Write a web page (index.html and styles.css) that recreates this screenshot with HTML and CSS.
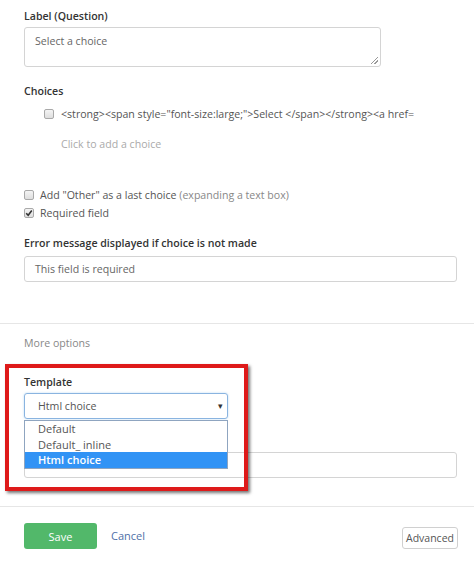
FILE: index.html
```html
<!DOCTYPE html>
<html>
<head>
<meta charset="utf-8">
<link rel="stylesheet" href="styles.css">
</head>
<body>
<div class="page">
  <section class="sec top">
    <div class="label">Label (Question)</div>
    <div class="textarea">Select a choice<span class="grip"></span></div>

    <div class="label choices-label">Choices</div>
    <div class="choice-row">
      <span class="cb"></span>
      <span class="choice-text">&lt;strong&gt;&lt;span style="font-size:large;"&gt;Select &lt;/span&gt;&lt;/strong&gt;&lt;a href=</span>
    </div>
    <div class="add-choice">Click to add a choice</div>

    <div class="check-row other"><span class="cb"></span><span>Add "Other" as a last choice <span class="muted">(expanding a text box)</span></span></div>
    <div class="check-row req"><span class="cb checked"><svg viewBox="0 0 10 10" width="10" height="10"><path d="M2.2 5.2 L4.2 7.2 L7.8 2.6" fill="none" stroke="#333" stroke-width="1.6"/></svg></span><span>Required field</span></div>

    <div class="label err-label">Error message displayed if choice is not made</div>
    <div class="input">This field is required</div>
  </section>

  <div class="rule rule1"></div>

  <section class="sec more-sec">
    <div class="more">More options</div>
    <div class="label tpl-label">Template</div>
    <div class="select-wrap">
      <div class="select">Html choice<span class="arrow">&#9662;</span></div>
      <ul class="dropdown">
        <li>Default</li>
        <li>Default_ inline</li>
        <li class="sel">Html choice</li>
      </ul>
    </div>
    <div class="input under"></div>
  </section>

  <div class="rule rule2"></div>

  <footer class="footer">
    <button class="save">Save</button>
    <a class="cancel">Cancel</a>
    <span class="spacer"></span>
    <button class="advanced">Advanced</button>
  </footer>

  <div class="annotation"></div>
</div>
</body>
</html>
```

FILE: styles.css
```css
html, body {
  margin: 0;
  padding: 0;
  background: #fff;
}
.page {
  position: relative;
  width: 474px;
  height: 566px;
  overflow: hidden;
  font-family: "Open Sans", "Noto Sans", sans-serif;
  font-size: 10.6px;
  line-height: 16px;
  color: #555;
}
.sec {
  padding: 0 17px 0 24px;
  display: flex;
  flex-direction: column;
  align-items: flex-start;
}
.top { padding-top: 8px; }
.label {
  font-weight: 600;
  color: #333;
}
.textarea {
  position: relative;
  box-sizing: border-box;
  width: 357px;
  height: 40px;
  margin-top: 3px;
  border: 1px solid #d4d4d4;
  border-radius: 3px;
  padding: 5px 10px;
  color: #666;
}
.grip {
  position: absolute;
  right: 2px;
  bottom: 2px;
  width: 7px;
  height: 7px;
  background: linear-gradient(135deg, transparent 45%, #999 45%, #999 55%, transparent 55%, transparent 70%, #999 70%, #999 80%, transparent 80%);
}
.choices-label { margin-top: 16px; }
.choice-row {
  margin-top: 7px;
  display: flex;
  align-items: center;
  padding-left: 20px;
  width: 394px;
  box-sizing: border-box;
  color: #555;
}
.choice-text {
  margin-left: 7px;
  white-space: nowrap;
  overflow: hidden;
  flex: 1;
}
.cb {
  flex: none;
  box-sizing: border-box;
  width: 10px;
  height: 10px;
  border: 1px solid #a9a9a9;
  border-radius: 2px;
  background: linear-gradient(#f4f4f4, #dedede);
  display: inline-flex;
}
.cb svg { display: block; margin: -1px; }
.add-choice {
  margin-top: 14px;
  padding-left: 37px;
  color: #aaa;
}
.check-row {
  display: flex;
  align-items: center;
  color: #555;
}
.check-row .cb { margin-right: 6px; }
.other { margin-top: 35px; }
.req { margin-top: 2px; }
.muted { color: #888; }
.err-label { margin-top: 14px; }
.input {
  box-sizing: border-box;
  width: 433px;
  height: 26px;
  margin-top: 5px;
  border: 1px solid #d4d4d4;
  border-radius: 3px;
  padding: 4px 10px;
  color: #666;
}
.rule {
  height: 1px;
  background: #e6e6e6;
}
.rule1 { margin-top: 41px; }
.more {
  margin-top: 11px;
  color: #888;
}
.tpl-label { margin-top: 23px; }
.select-wrap {
  position: relative;
  margin-top: 3px;
}
.select {
  box-sizing: border-box;
  width: 204px;
  height: 26px;
  border: 1px solid #8ab4e0;
  border-radius: 3px;
  padding: 4px 13px;
  color: #555;
  position: relative;
  box-shadow: 0 0 2px rgba(102, 175, 233, 0.5);
}
.arrow {
  position: absolute;
  right: 4px;
  top: 4px;
  font-size: 9px;
  color: #333;
}
.dropdown {
  position: absolute;
  left: 0;
  top: 27px;
  width: 204px;
  box-sizing: border-box;
  margin: 0;
  padding: 0;
  list-style: none;
  background: #fff;
  border: 1px solid #8fa5c0;
  z-index: 2;
}
.dropdown li {
  height: 15.5px;
  line-height: 15px;
  padding-left: 13px;
  color: #555;
  font-size: 11px;
}
.dropdown li.sel {
  background: #3193f5;
  color: #fff;
  font-weight: 600;
}
.under { margin-top: 33px; }
.rule2 { margin-top: 28px; }
.footer {
  display: flex;
  align-items: flex-start;
  padding: 16px 16px 0 24px;
}
.save {
  width: 73px;
  height: 26px;
  border: none;
  border-radius: 3px;
  background: #52b86a;
  color: #fff;
  font-family: inherit;
  font-size: 11px;
  padding: 0;
}
.cancel {
  margin-left: 14px;
  margin-top: 5px;
  color: #4f70a8;
  font-size: 11px;
}
.spacer { flex: 1; }
.advanced {
  margin-top: 4px;
  width: 56px;
  height: 22px;
  border: 1px solid #d0d0d0;
  border-radius: 3px;
  background: #fff;
  color: #555;
  font-family: inherit;
  font-size: 10.5px;
  padding: 0;
}
.annotation {
  position: absolute;
  left: 5px;
  top: 364px;
  width: 243px;
  height: 127px;
  box-sizing: border-box;
  border: 4px solid #de1a1a;
  box-shadow: 2px 2px 3px rgba(0, 0, 0, 0.55);
  pointer-events: none;
}
```
